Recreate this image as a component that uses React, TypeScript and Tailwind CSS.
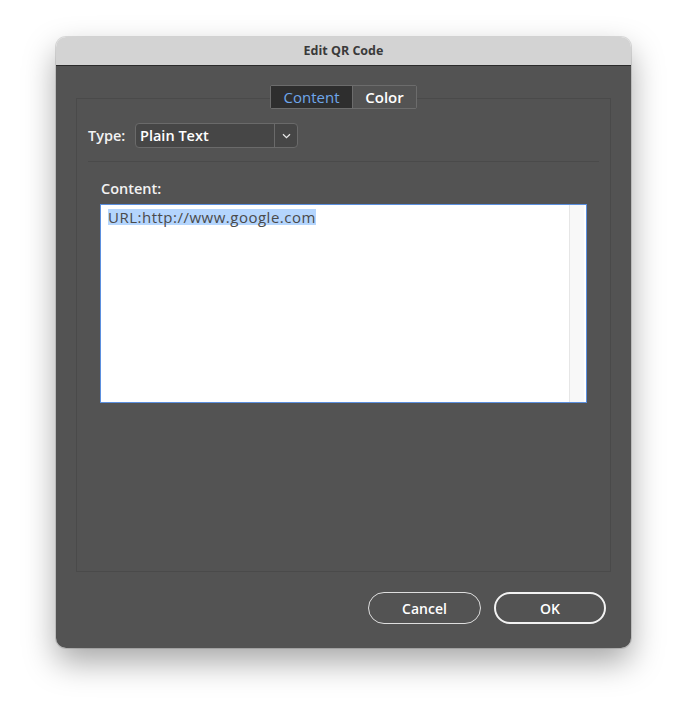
import React from "react";

export default function App() {
  return (
    <div
      className="w-[687px] h-[723px] bg-white pl-[56px] pt-[37px]"
      style={{ fontFamily: "'Open Sans', Lato, sans-serif" }}
    >
      <div className="w-[575px] h-[611px] rounded-[10px] overflow-hidden flex flex-col shadow-[0_0_0_1px_rgba(0,0,0,0.12),0_14px_32px_rgba(0,0,0,0.35)]">
        <div className="h-[29px] shrink-0 bg-[#d3d3d3] border-b border-[#2b2b2b] flex items-center justify-center text-[12.5px] font-bold text-[#3a3a3a]">
          Edit QR Code
        </div>
        <div className="flex-1 bg-[#535353] flex flex-col px-[20px] pt-[19px]">
          <div className="relative z-10 flex justify-center">
            <div className="flex h-[24px] border-[1.5px] border-[#6c6c6c] rounded-[2px] text-[15px] font-medium">
              <div className="w-[81px] bg-[#2e2e2e] text-[#6fa6ea] flex items-center justify-center">
                Content
              </div>
              <div className="w-[64px] border-l-[1.5px] border-[#6c6c6c] bg-[#535353] text-white flex items-center justify-center font-semibold">
                Color
              </div>
            </div>
          </div>
          <div className="mt-[-11px] h-[474px] border border-[#4a4a4a] flex flex-col pt-[24px]">
            <div className="flex items-center pl-[11px]">
              <span className="w-[47px] text-[14.5px] font-semibold text-[#f2f2f2]">Type:</span>
              <div className="flex h-[25px] w-[163px] border border-[#6a6a6a] rounded-[4px] bg-[#464646] overflow-hidden">
                <div className="flex-1 flex items-center pl-[4px] text-[14.5px] font-semibold text-white">Plain Text</div>
                <div className="w-[23px] border-l border-[#6a6a6a] flex items-center justify-center">
                  <svg width="9" height="6" viewBox="0 0 9 6">
                    <path d="M1 1.2 L4.5 4.6 L8 1.2" fill="none" stroke="#e8e8e8" strokeWidth="1.3" />
                  </svg>
                </div>
              </div>
            </div>
            <div className="mt-[13px] ml-[11px] mr-[11px] h-px bg-[#4a4a4a]" />
            <div className="mt-[18px] pl-[24px] text-[14.5px] font-semibold leading-[17px] text-[#f2f2f2]">Content:</div>
            <div className="mt-[7px] mx-[23px] h-[199px] bg-white border-[1.5px] border-[#5b8fde] flex">
              <div className="flex-1 pl-[7px]">
                <span className="bg-[#b4d5fd] text-[#4a4a4a] text-[15px] tracking-[0.5px] leading-[16px] inline-block">
                  URL:http://www.google.com
                </span>
              </div>
              <div className="w-[15px] bg-[#f8f8f8] border-l border-[#e6e6e6] mr-[2px]" />
            </div>
          </div>
          <div className="mt-[20px] flex justify-end gap-[13px] pr-[5px]">
            <button className="w-[113px] h-[32px] rounded-full border border-[#dedede] text-white text-[14px] font-semibold">
              Cancel
            </button>
            <button className="w-[112px] h-[32px] rounded-full border-2 border-[#f2f2f2] text-white text-[14px] font-semibold">
              OK
            </button>
          </div>
        </div>
      </div>
    </div>
  );
}
